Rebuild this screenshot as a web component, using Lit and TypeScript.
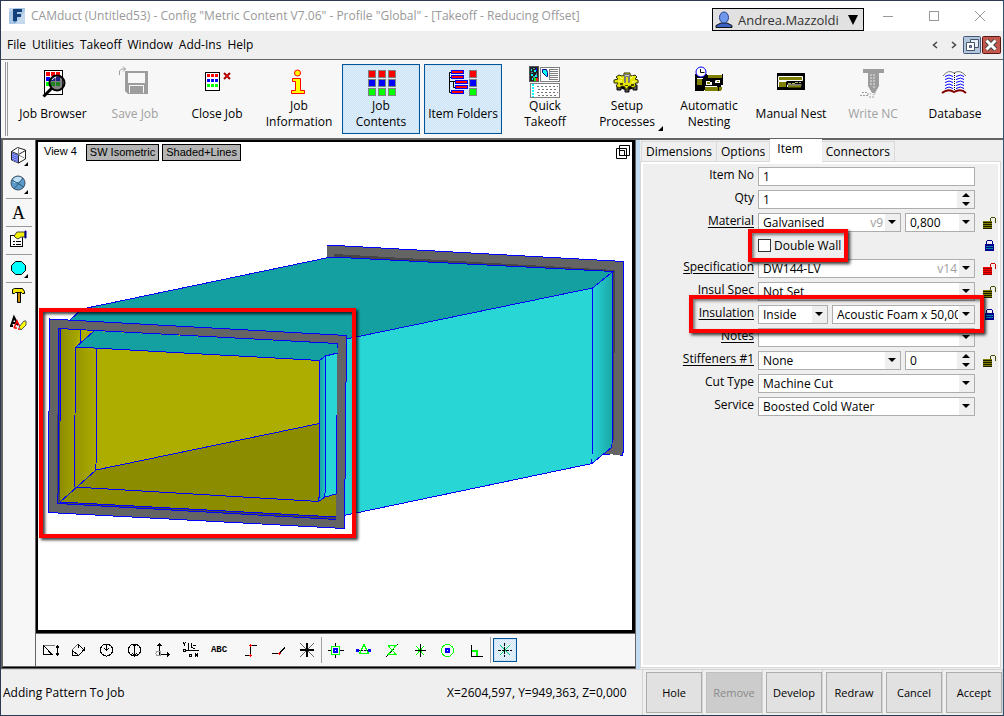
import { LitElement, html, svg, css, nothing } from "lit";
import { customElement, property, state } from "lit/decorators.js";
import { classMap } from "lit/directives/class-map.js";

const grid3 = (x: number, y: number, w: number, h: number, px: number, py: number) =>
  ["#f00", "#00f", "#0f0"].map((c, r) =>
    [0, 1, 2].map((i) => svg`<rect x=${x + i * px} y=${y + r * py} width=${w} height=${h} fill=${c} />`)
  );

const ICONS: Record<string, unknown> = {
  browser: svg`
    <rect x="7.5" y="4.5" width="18" height="24" fill="#fff" stroke="#000"/>
    ${grid3(9, 6, 4, 4, 5, 5)}
    <circle cx="20" cy="17" r="7.5" fill="#333" fill-opacity=".62" stroke="#000" stroke-width="2"/>
    <path d="M14.500 22.500L6.500 30.500" stroke="#000" stroke-width="3"/>
    <path d="M15 14a6 6 0 0 1 4-3" stroke="#fff" fill="none"/>`,
  save: svg`
    <path d="M6 5h23v23h-20l-3-3z" fill="#9d9d9d"/>
    <path d="M9 7h17v10h-17zM10 19h15v8h-15z" fill="#f7f7f7"/><path d="M11 20h13v8h-13z" fill="#9d9d9d"/>
    <path d="M.5 9v-4l2-2h4M4 .5l2.500 2.500l-2.500 2.500" fill="none" stroke="#9d9d9d"/>`,
  close: svg`
    <rect x="4.500" y="6.500" width="14" height="18" fill="#fff" stroke="#000"/>
    ${grid3(6, 8, 3, 3, 4, 5)}
    <path d="M23 7l6 6M29 7l-6 6" stroke="#a00000" stroke-width="2"/><path d="M25 9h2v2h-2z" fill="#f00"/>`,
  info: svg`
    <circle cx="14.500" cy="7" r="3" fill="#ff0" stroke="#f00"/>
    <path d="M9.500 12.500h8v12h4v3h-13v-3h4v-9h-3z" fill="#ff0" stroke="#f00"/>`,
  contents: svg`${["#f00", "#00f", "#0f0"].map((c, r) =>
    [0, 1, 2].map((i) => svg`<rect x=${3.5 + i * 10} y=${4.5 + r * 9} width="7" height="7" fill=${c} stroke="#808080"/>`)
  )}`,
  folders: svg`
    ${["#f00", "#00f", "#0f0"].map((c, r) => svg`<rect x="22.500" y=${4.5 + r * 9} width="7" height="7" fill=${c} stroke="#808080"/>`)}
    <path d="M4 6.500h-1.500v20h2M2.500 11.500h2M2.500 15.500h6M6.500 16v5.500h2" fill="none" stroke="#000"/>
    ${[[4, 4], [4, 9], [8, 14], [8, 19], [4, 24]].map(([x, y]) =>
      svg`<rect x=${x + 0.5} y=${y + 0.5} width="12" height="3" fill="#f00" stroke="#00f"/>`)}`,
  quick: svg`
    <rect x=".5" y=".5" width="9" height="15" fill="#222" stroke="#555"/>
    <path d="M2 3h1v2h-1zM5 4h2v2h-2zM2 8h2v2h-2zM6 9h2v2h-2zM3 12h1v2h-1z" fill="#0ff"/>
    <path d="M4 2h2v1h-2zM2 6h2v1h-2zM7 7h1v2h-1zM4 10h2v2h-2z" fill="#4b8f9f"/>
    <path d="M5 12h2v3h-2z" fill="#0f0"/><path d="M7 12h2v3h-2z" fill="#f22"/><path d="M7 2h1v3h-1z" fill="#00f"/>
    <rect x="11.500" y="1.500" width="19" height="14" fill="#fff" stroke="#808080"/>
    <path d="M13.500 3.500h4l1 3v4h-1l-4-4z" fill="#0ff" stroke="#008"/>
    <path d="M21 3.500h8M21 5.500h8M21 7.500h8M21 9.500h8M21 11.500h8M21 13.500h8M20.500 3v11" stroke="#808080"/>
    <rect x="1.500" y="17.500" width="29" height="14" fill="#fff" stroke="#808080"/>
    <path d="M4 18v13" stroke="#0ff" stroke-width="2" stroke-dasharray="2 1"/>
    <path d="M8 20.500h21M9 23.500h20M8 26.500h21M9 29.500h20" stroke="#777" stroke-dasharray="2 2"/>`,
  setup: svg`
    <ellipse cx="16" cy="18" rx="9" ry="6" fill="#000"/>
    <path d="M6 19h4v5h-4zM14 21h4v5h-4zM22 19h4v5h-4z" fill="#555" stroke="#000"/>
    <path d="M8 9l3 1l2-1v-2h6v2l2 1l3-1l2 2l-2 2l3 1v3h-3l1 3l-3 2l-3-2l-2 1v2h-3v-2l-3-1l-3 2l-3-2l2-3h-4v-3l4-1l-2-2z" fill="#e5e500" stroke="#2b2b00"/>
    <path d="M9 11l3 2M22 10l-3 3M7 15h4M21 16h4" stroke="#ff9"/>
    <path d="M9 17h3v2h-3zM20 18h3v2h-3zM14 19h3v1h-3z" fill="#444400"/>
    <path d="M13.500 8.500h5v8h-1v-6h-3v6h-1z" fill="#c9c9c9" stroke="#777"/>`,
  auto: svg`
    <path d="M2 8h28v11h-2v6h-10v-1h-7v1h-9z" fill="#000"/>
    <path d="M15 8h14v4h-14zM4 13h5v6h-5zM12 21h13v4h-13z" fill="#808000"/>
    <path d="M14 8.500h15M4 12.500h6M12 20.500h12" stroke="#fff"/>
    <path d="M13 15h4v1h2v3h-6zM23 14h4v3h-5v-2z" fill="#fff"/><path d="M14 16h3v2h-3zM24 15h2v1h-2z" fill="#808000"/>
    <path d="M26 21h3v3h-1v1h-2z" fill="#808000"/>
    <circle cx="8" cy="6" r="5" fill="#fff" stroke="#00f"/><path d="M7.500 3v3.500h4" fill="none" stroke="#000"/>`,
  manual: svg`
    <path d="M2 7h28v17h-28z" fill="#000"/>
    <path d="M3.500 10.500h24v4h-24z" fill="#808000" stroke="#fff"/>
    <path d="M4 16h7v5h-7z" fill="#808000"/><path d="M3.500 21v-5.500h8M12.500 21v-2h14" fill="none" stroke="#fff"/>
    <path d="M13 17.500h7M20 16.500h6" stroke="#b8b85a" stroke-dasharray="3 1"/><path d="M13 20.500h13" stroke="#808000" stroke-width="2"/>`,
  nc: svg`
    <path d="M6 3h21v4h-5v13l-4 7h-3l-4-7v-13h-5z" fill="#9d9d9d"/>
    <path d="M14 8v12M17 8v14" stroke="#e8e8e8" stroke-dasharray="2 1"/>
    <path d="M3 29.500h8M5 26.500h6M10 28h4M12 31h5M16 29l3-2" stroke="#9d9d9d" stroke-dasharray="2 1"/>`,
  db: svg`
    <path d="M6 24v-14l-1-2q5-5 10-1q6-4 10 1l-1 2v14q-5-3-9 0q-4-3-9 0z" fill="#fff"/>
    <path d="M4 10q5-7 11-3q6-4 12 3" fill="none" stroke="#777"/><path d="M15.500 7v17" stroke="#000" stroke-dasharray="1 1"/>
    ${[10, 13, 16, 19, 22].map((y) => svg`<path d="M6 ${y + 0.5}q4-3 8 0M17 ${y + 0.5}q5-3 8 0" fill="none" stroke="#00f"/>`)}
    <path d="M3 27q6-5 12-1q7-4 12 1" fill="none" stroke="#800000" stroke-width="2"/>`,
};

const SIDE: Record<string, unknown> = {
  cube: svg`
    <path d="M2.500 5.500l6-4l8 2.500v9l-7 4l-7-3z" fill="#fff" stroke="#222"/>
    <path d="M3 6.500l6 2v8l-6-2.500z" fill="#8f9bf0"/><path d="M4 7v7M6 8v7M8 8.500v7" stroke="#1a2bd0" stroke-dasharray="1 1"/>
    <path d="M2.500 5.500l7 3v8.500M9.500 8.500l7-4" stroke="#222" fill="none"/><path d="M9.500 2v7l6 3" stroke="#888" fill="none"/>
    <path d="M19 16v4h-4z" fill="#000"/>`,
  globe: svg`
    <circle cx="9" cy="9" r="7" fill="#5b9bcb" stroke="#3b4a5c"/><path d="M4 5q4-4 9-1l-1 3l-7 2z" fill="#bfe0f5"/>
    <path d="M3 6l12 7M14 4l-9 11" stroke="#2f5878"/><path d="M19 16v4h-4z" fill="#000"/>`,
  props: svg`
    <rect x="1.500" y="5.500" width="12" height="11" fill="#fff" stroke="#000"/>
    <path d="M4 11.500h2M7 11.500h5M4 14.500h2M7 14.500h5" stroke="#000"/>
    <path d="M5 6l3-4h8v5h-4l-3 2l-2-1z" fill="#f3ef00" stroke="#444"/><path d="M16 1h1v7h-1z" fill="#000080" stroke="#000080"/>`,
  octagon: svg`<path d="M6.500 3.500h6l4 4v5l-4 4h-6l-4-4v-5z" fill="#0ff" stroke="#000"/><path d="M19 16v4h-4z" fill="#000"/>`,
  hammer: svg`
    <path d="M8.500 6.500h3v10h-3z" fill="#c98a00" stroke="#000"/><path d="M3.500 3.500l2-1h8l2 3v2h-2l-1-1h-6l-1 1h-2z" fill="#f3e600" stroke="#000"/>`,
  eraser: svg`
    <path d="M2 12l3-9l3 6M3 9h4M1 12h3M7 9l2 2" fill="none" stroke="#000" stroke-width="2"/>
    <path d="M5 14l3-7l3 6M5 14h3M9 15h4" fill="none" stroke="#f00" stroke-width="1.500"/>
    <path d="M10 13l5-6h2v4l-5 5z" fill="#ff0" stroke="#555"/>`,
};

const DRAW: Record<string, unknown> = {
  rect: svg`<path d="M1.500 4.500v9h8.500zM1.500 4.500l8.500 9M15.500 4v10M14 6.500l1.500-2l1.500 2M14 12.500l1.500 2l1.500-2" fill="none" stroke="#000"/><path d="M2 4.500h11" stroke="#777"/>`,
  rot: svg`<path d="M2.500 9.500v5h6l5-5M2.500 9.500l6 5M8.500 3.500l6 6M14.500 6v3.500h-3M8.500 6.500v-3h-2" fill="none" stroke="#000"/><path d="M2 9l6-6" stroke="#666"/>`,
  radius: svg`<circle cx="8.500" cy="9" r="6" fill="none" stroke="#000"/><path d="M8.500 3v6M6 7l2.500 2.500l2.500-2.500" fill="none" stroke="#000"/>`,
  diam: svg`<circle cx="8.500" cy="9" r="6" fill="none" stroke="#000"/><path d="M8.500 3v12M6.500 5.500l2-2l2 2M6.500 12.500l2 2l2-2" fill="none" stroke="#000"/>`,
  axis: svg`<path d="M5.500 13v-10M3.500 5l2-2l2 2M5 13.500h10M13 11.500l2 2l-2 2" fill="none" stroke="#000"/><circle cx="4.500" cy="12.500" r="2.500" fill="none" stroke="#999"/>`,
  origin: svg`<path d="M1 1l1.500 2l1.500-2M2.500 3v2M6.500 2v7.500h10M6 9.500h-2M9.500 2v4l4 2.500M1.500 8.500h2v2h-2zM7.500 13.500h2v2h-2zM13 12.500l3 3M16 12.500l-3 3M11 4.500h3" fill="none" stroke="#000"/>`,
  corner: svg`<path d="M3 14.500h5.500v-10h6" fill="none" stroke="#000"/><path d="M7 4h3v1h-3zM8 3h1v3h-1zM7 14h3v1h-3zM8 13h1v3h-1z" fill="#f00"/>`,
  slope: svg`<path d="M2 12.500h7l6-6" fill="none" stroke="#000"/><path d="M8 12h3v1h-3zM9 11h1v3h-1z" fill="#f00"/>`,
  star: svg`<path d="M2 2l14 14M16 2l-14 14" stroke="#666"/><path d="M9 2v14M2 9h14" stroke="#000" stroke-width="2"/>`,
  sq: svg`<path d="M1 9.500h16M8.500 2v15" stroke="#000"/><path d="M4.500 5.500h8v8h-8z" fill="#fff" stroke="#0f0"/><path d="M6 7h5v5h-5z" fill="#00f"/><path d="M8 9h1v1h-1z" fill="#fff"/>`,
  tri: svg`<path d="M4.500 12.500l4.500-9l4.500 9z" fill="none" stroke="#0f0"/><path d="M3 9.500h12" stroke="#000" stroke-dasharray="2 1"/><path d="M1 8h3v3h-3zM13 8h3v3h-3z" fill="#00f"/>`,
  hour: svg`<path d="M3 16l12-13" stroke="#000"/><path d="M5 4.500h8l-8 9h8l-8-9" fill="none" stroke="#0f0"/>`,
  cross: svg`<path d="M5 5l8 9M13 5l-8 9" stroke="#0f0"/><path d="M9.500 3v13M4 9.500h11" stroke="#000"/>`,
  circ: svg`<circle cx="8.500" cy="9.500" r="6" fill="none" stroke="#0f0"/><path d="M6 7h5v5h-5z" fill="#00f"/><path d="M8 9h1v1h-1z" fill="#fff"/>`,
  perp: svg`<path d="M4.500 4v11.500h11" fill="none" stroke="#000"/><path d="M5 10h5v5" fill="none" stroke="#0f0" stroke-width="2"/>`,
  snap: svg`<path d="M4 4l10 10M14 4l-10 10" stroke="#0c6"/><path d="M8.500 2v14M2 9.500h14" stroke="#000" stroke-dasharray="3 1"/>`,
};

const BLUE = "#0000ff";

const scene = svg`
  <defs>
    <linearGradient id="side"><stop offset="0" stop-color="#29d6d6"/><stop offset="1" stop-color="#18a4a4"/></linearGradient>
    <linearGradient id="wall1"><stop offset="0" stop-color="#8c8c00"/><stop offset="1" stop-color="#aaaa00"/></linearGradient>
    <linearGradient id="wall2"><stop offset="0" stop-color="#949400"/><stop offset="1" stop-color="#adad00"/></linearGradient>
    <linearGradient id="lip"><stop offset="0" stop-color="#149fa1"/><stop offset="1" stop-color="#24c6c6"/></linearGradient>
    <filter id="drop" x="-10%" y="-10%" width="120%" height="120%"><feDropShadow dx="2" dy="2" stdDeviation="1.500" flood-color="#000" flood-opacity=".8"/></filter>
  </defs>
  <g shape-rendering="crispEdges">
    <path d="M327 245L624 261.500L623 455L602 454L327 258z" fill="#646464"/>
    <path d="M334 254L615 270L614 440L611 440L610 273L334 257z" fill="#464646"/>
    <path d="M70 320L82 309L331 257L613 271.500L592 288L344 340z" fill="#149fa1"/>
    <path d="M344 339L592.500 288L592 463L344 516z" fill="#29d6d6"/>
    <path d="M592.500 288L613 271.500L612 447L592 463.500z" fill="url(#side)"/>
    <path d="M70 320L82 309L331 257L613 271.500L592.500 288L344 339.500M592.500 288L592 463.500L344 515.500M613 271.500L612 447L592 463.500M327 245L624 261.500L623 455M602 454.500h8M620 455.500h3" fill="none" stroke=${BLUE}/>
    <path d="M49 319L346.500 335.500L344.500 528.500L48.500 512.500z" fill="#646464"/>
    <path d="M58 328L337.500 343.500L336 519.500L57 504z" fill="#464646"/>
    <path d="M60.500 329L337 344L336 517.500L60 502z" fill="#adad00"/>
    <path d="M60.500 329H80L75 347L75 488L60 502z" fill="url(#wall1)"/>
    <path d="M75 347L97 348L96 470L75 487.500z" fill="url(#wall2)"/>
    <path d="M96 470L320 423.500L319 501L325 497L336 494V517.500L60 502z" fill="#8c8c00"/>
    <path d="M94 331L337.500 344V353L325.500 356L319.500 360.500L76 347z" fill="#149fa1"/>
    <path d="M325.500 356L337.500 353L336 494L325 497z" fill="#29d6d6"/>
    <path d="M319.500 360.500L325.500 356L325 497L319 501.500z" fill="url(#lip)"/>
    <path d="M49.500 319L346.500 335.500L344.500 528.500L48.500 512.500zM58.500 328.500L58 503.500L336 519.500M60.500 329V421M60 502L336 517" fill="none" stroke=${BLUE}/>
    <path d="M58.500 328.500L337.500 343.500V348M336.500 415V494M80.500 329.500V343M94 331L76 347L319.500 360.500L325.500 356L337.500 353M75.500 347L74.500 487L319 501.500L325 497L336 494M319.500 360.500L319 501.500M325.500 356L325 497M96.500 348L96 470L319.500 423.500M96 470L60 502" fill="none" stroke=${BLUE}/>
  </g>
  <rect x="41" y="310" width="313" height="226" fill="none" stroke="#f00" stroke-width="4" filter="url(#drop)"/>`;

const lock = (color: string, open: boolean) =>
  open
    ? svg`
      <path d="M7.500 6v-3.500l1.500-1h2l1.500 1v4" fill="none" stroke=${color === "#f00" ? "#d00000" : "#4a4a00"}/>
      <path d="M0 5h9v8h-9z" fill=${color}/>
      <path d="M0 6.500h9M0 8.500h9M0 10.500h9M0 12.500h9" stroke=${color === "#f00" ? "#a00000" : "#1c1c00"}/>`
    : svg`
      <path d="M3.500 6v-3.500l1.500-1h3l1.500 1v3.500" fill="none" stroke=${color}/>
      <path d="M2 5h9v7h-9z" fill=${color}/>
      <path d="M3 7.500h7M3 9.500h7" stroke="#008c9c"/>`;

type Field = { kind: "text" | "spin" | "select"; value: string; note?: string; narrow?: boolean };
type Row = { label: string; link?: boolean; fields?: Field[]; lock?: [string, boolean]; check?: boolean; mark?: boolean };

const ROWS: Row[] = [
  { label: "Item No", fields: [{ kind: "text", value: "1" }] },
  { label: "Qty", fields: [{ kind: "spin", value: "1" }] },
  {
    label: "Material", link: true, lock: ["#808000", true],
    fields: [{ kind: "select", value: "Galvanised", note: "v9" }, { kind: "select", value: "0,800", narrow: true }],
  },
  { label: "Double Wall", check: true, lock: ["#000090", false] },
  { label: "Specification", link: true, lock: ["#f00", true], fields: [{ kind: "select", value: "DW144-LV", note: "v14" }] },
  { label: "Insul Spec", lock: ["#808000", true], fields: [{ kind: "select", value: "Not Set" }] },
  {
    label: "Insulation", link: true, mark: true, lock: ["#000090", false],
    fields: [{ kind: "select", value: "Inside", narrow: true }, { kind: "select", value: "Acoustic Foam x 50,000" }],
  },
  { label: "Notes", link: true, fields: [{ kind: "select", value: "" }] },
  {
    label: "Stiffeners #1", link: true, lock: ["#808000", true],
    fields: [{ kind: "select", value: "None" }, { kind: "spin", value: "0", narrow: true }],
  },
  { label: "Cut Type", fields: [{ kind: "select", value: "Machine Cut" }] },
  { label: "Service", fields: [{ kind: "select", value: "Boosted Cold Water" }] },
];

@customElement("item-form")
class ItemForm extends LitElement {
  static styles = css`
    :host { display: flex; flex-direction: column; gap: 4px; padding: 3px 2px 3px 0; }
    .row { display: flex; align-items: center; height: 19px; position: relative; }
    .label { width: 111px; margin-right: 4px; text-align: right; line-height: 16px; padding-bottom: 3px; box-sizing: border-box; white-space: nowrap; color: #000; }
    .link { text-decoration: underline; text-underline-offset: 2px; }
    .fields { flex: 1; min-width: 0; display: flex; gap: 4px; }
    .field { position: relative; flex: 1; min-width: 0; height: 19px; display: flex; }
    .narrow { flex: 0 0 70px; }
    .box { width: 100%; height: 19px; box-sizing: border-box; border: 1px solid #adadad; border-radius: 0; background: #fff; font: inherit; color: #000; margin: 0; padding: 0 16px 0 4px; appearance: none; outline: none; }
    .drop { position: absolute; right: 1px; top: 1px; width: 15px; height: 17px; background: #efefef; pointer-events: none; }
    .note { position: absolute; right: 18px; top: 2px; line-height: 16px; color: #a0a0a0; pointer-events: none; }
    .spin { position: absolute; right: 1px; top: 1px; width: 17px; height: 17px; background: #efefef; display: flex; flex-direction: column; }
    .step { flex: 1; min-height: 0; border: 0; padding: 0; background: none; display: flex; justify-content: center; align-items: center; }
    .lock { width: 13px; height: 13px; margin-left: 8px; }
    .check { display: flex; align-items: center; line-height: 16px; gap: 3px; color: #000; }
    .tick { appearance: none; width: 13px; height: 13px; margin: 0; border: 1px solid #333; background: #fff; }
    .mark { position: absolute; border: 4px solid #f00; box-shadow: 2px 2px 3px rgba(0, 0, 0, 0.8), inset 2px 2px 3px rgba(0, 0, 0, 0.5); z-index: 2; pointer-events: none; box-sizing: border-box; }
    .whole { left: 46px; right: 12px; top: -10px; height: 38px; }
    .small { left: -10px; right: -7px; top: -9px; height: 33px; }
    .ticked { position: relative; }
  `;

  private field(f: Field, label: string, id: string, first: boolean) {
    const name = first ? nothing : `${label} value`;
    const cls = classMap({ field: true, narrow: !!f.narrow });
    if (f.kind === "select")
      return html`<div class=${cls}>
        <select class="box" id=${id} aria-label=${name}><option>${f.value}</option></select>
        ${f.note ? html`<span class="note">${f.note}</span>` : nothing}
        <svg class="drop" viewBox="0 0 15 17" aria-hidden="true"><path d="M3 6h8l-4 4z" fill="#000" /></svg>
      </div>`;
    return html`<div class=${cls}>
      <input class="box" id=${id} aria-label=${name} .value=${f.value} />
      ${f.kind === "spin"
        ? html`<div class="spin">
            <button class="step" aria-label="Increase"><svg width="8" height="4"><path d="M4 0l4 4h-8z" /></svg></button>
            <button class="step" aria-label="Decrease"><svg width="8" height="4"><path d="M0 0h8l-4 4z" /></svg></button>
          </div>`
        : nothing}
    </div>`;
  }

  render() {
    return ROWS.map(
      (r, i) => html`<div class="row">
        ${r.check
          ? html`<span class="label"></span>
              <div class="fields"><div class="ticked">
                <label class="check"><input class="tick" type="checkbox" />${r.label}</label>
                <div class="mark small"></div>
              </div></div>`
          : html`<label class=${classMap({ label: true, link: !!r.link })} for=${`f${i}a`}>${r.label}</label>
              <div class="fields">${r.fields!.map((f, k) => this.field(f, r.label, `f${i}${k ? "b" : "a"}`, !k))}</div>`}
        <svg class="lock" viewBox="0 0 13 13" shape-rendering="crispEdges" aria-hidden="true">
          ${r.lock ? lock(r.lock[0], r.lock[1]) : nothing}
        </svg>
        ${r.mark ? html`<div class="mark whole"></div>` : nothing}
      </div>`
    );
  }
}

const TOOLS: { icon: string; text: string[]; on?: boolean; off?: boolean; menu?: boolean }[] = [
  { icon: "browser", text: ["Job Browser"] },
  { icon: "save", text: ["Save Job"], off: true },
  { icon: "close", text: ["Close Job"] },
  { icon: "info", text: ["Job", "Information"] },
  { icon: "contents", text: ["Job", "Contents"], on: true },
  { icon: "folders", text: ["Item Folders"], on: true },
  { icon: "quick", text: ["Quick", "Takeoff"] },
  { icon: "setup", text: ["Setup", "Processes"], menu: true },
  { icon: "auto", text: ["Automatic", "Nesting"] },
  { icon: "manual", text: ["Manual Nest"] },
  { icon: "nc", text: ["Write NC"], off: true },
  { icon: "db", text: ["Database"] },
];

@customElement("app-root")
class AppRoot extends LitElement {
  @property() user = "Andrea.Mazzoldi";
  @state() private tab = "Item";

  static styles = css`
    :host { display: flex; flex-direction: column; height: 100vh; box-sizing: border-box; overflow: hidden; background: #efefef; border: 1px solid #2b3a52; border-right-color: #2f5573; color: #000; font: 12px/16px "Open Sans", "Noto Sans", sans-serif; }
    button { font: inherit; color: inherit; border-radius: 0; }
    .title { height: 30px; background: #fff; display: flex; align-items: center; padding-left: 8px; flex: none; }
    .caption { flex: 1; margin-left: 6px; color: #999; white-space: nowrap; }
    .user { display: flex; align-items: center; align-self: flex-end; width: 152px; height: 23px; box-sizing: border-box; padding: 0 5px 0 2px; border: 1px solid #000; background: #e1e1e1; font-size: 13px; color: #333; z-index: 1; }
    .username { flex: 1; text-align: left; margin-left: 5px; }
    .winbtn { width: 46px; height: 30px; border: 0; background: none; padding: 0; display: flex; align-items: center; justify-content: center; }
    .winbtns { display: flex; margin-left: 1px; }
    .menu { height: 29px; flex: none; display: flex; align-items: center; padding-left: 3px; border-bottom: 1px solid #646464; box-sizing: border-box; }
    .menuitem { border: 0; background: none; padding: 0 3px; }
    .grow { flex: 1; }
    .mdi { display: flex; align-items: center; padding-right: 2px; }
    .arrow { width: 19px; height: 18px; border: 0; padding: 0; background: none; display: flex; align-items: center; justify-content: center; }
    .mdibtn { width: 19px; height: 19px; padding: 0; border: 0; background: none; display: block; }
    .tools { height: 78px; flex: none; background: #f7f7f7; display: flex; gap: 4px; padding: 4px 4px 0 4px; box-sizing: border-box; }
    .grip { width: 1px; height: 74px; margin-top: -2px; border-left: 1px solid #999; border-right: 1px solid #999; margin-right: 2px; }
    .tool { position: relative; width: 78px; height: 70px; border: 1px solid transparent; background: none; padding: 1px 0 3px; display: flex; flex-direction: column; align-items: center; flex: none; line-height: 16px; }
    .on { border-color: #005499; background: repeating-conic-gradient(#cce4f7 0 25%, #e0eefa 0 50%) 0 0 / 2px 2px; box-shadow: inset 0 0 0 1px #cce4f7; }
    .off { color: #a0a0a0; }
    .text { flex: 1; display: flex; flex-direction: column; justify-content: center; white-space: nowrap; }
    .icon { width: 32px; height: 32px; flex: none; }
    .corner { position: absolute; right: 2px; bottom: 2px; }
    .main { flex: 1; min-height: 0; display: flex; border-top: 2px solid #646464; }
    .work { flex: 1; min-width: 0; display: flex; flex-direction: column; border-right: 1px solid #646464; border-bottom: 1px solid #646464; }
    .upper { flex: 1; min-height: 0; display: flex; border-left: 2px solid #646464; border-bottom: 1px solid #000; }
    .side { width: 32px; background: #f7f7f7; border-right: 1px solid #646464; border-bottom: 1px solid #646464; display: flex; flex-direction: column; align-items: center; padding-top: 2px; }
    .sidebtn { width: 26px; height: 28px; border: 0; padding: 0 0 0 3px; background: none; flex: none; display: flex; align-items: center; }
    .ruled { border-top: 1px solid #999; }
    .letter { font: 18px/20px "Liberation Serif", serif; padding-left: 6px; }
    .right { flex: 1; min-width: 0; display: flex; flex-direction: column; }
    .view { flex: 1; min-height: 0; background: #fff; border: 2px solid #000; border-right-width: 3px; border-bottom-width: 3px; position: relative; }
    .scene { display: block; width: 100%; height: 100%; }
    .viewbar { position: absolute; left: 5px; right: 2px; top: 2px; display: flex; gap: 3px; align-items: flex-start; font: 11px/14px "Liberation Sans", sans-serif; }
    .viewname { padding: 0 6px 0 1px; }
    .chip { border: 1px solid #000; background: #b4b4b4; padding: 0 3px 1px; height: 17px; font: inherit; }
    .draw { height: 34px; flex: none; background: #f7f7f7; border-top: 1px solid #646464; border-bottom: 1px solid #646464; box-sizing: border-box; display: flex; align-items: center; padding-left: 1px; }
    .drawbtn { width: 24px; height: 24px; margin: 0 2px; border: 1px solid transparent; background: none; padding: 0; display: flex; align-items: center; justify-content: center; flex: none; }
    .drawbtn.on { border-color: #005499; background: repeating-conic-gradient(#cce4f7 0 25%, #f0f7fd 0 50%) 0 0 / 2px 2px; }
    .sep { width: 1px; height: 26px; background: #a0a0a0; }
    .gap { width: 4px; }
    .abc { font: bold 9px/10px "Liberation Mono", monospace; }
    .panel { width: 367px; flex: none; box-sizing: border-box; border-left: 4px solid #c3dcf2; padding: 0 2px 1px 0; display: flex; flex-direction: column; }
    .tabs { display: flex; align-items: flex-end; height: 21px; padding-left: 1px; flex: none; }
    .tab { height: 20px; border: 1px solid #d9d9d9; border-bottom: 0; border-left-width: 0; background: #efefef; padding: 0 4px; margin: 0; }
    .tab:first-child { border-left-width: 1px; }
    .current { height: 23px; background: #fff; border-color: #fff; margin-bottom: -1px; padding: 0 18px 5px 7px; position: relative; }
    .page { flex: 1; min-height: 0; border: 1px solid #d9d9d9; box-shadow: inset 0 0 0 2px #fff; padding: 2px; }
    .status { height: 46px; flex: none; display: flex; align-items: stretch; border-top: 1px solid #d4d4d4; box-sizing: border-box; padding-left: 2px; }
    .msg { flex: 1; align-self: center; }
    .coord { align-self: center; width: 195px; }
    .cell { padding: 2px 0 2px 3px; width: 60px; border-right: 1px solid #d4d4d4; box-sizing: border-box; display: flex; }
    .cell:first-child { border-left: 1px solid #d4d4d4; width: 61px; }
    .cells { display: flex; }
    .act { flex: 1; border: 1px solid #adadad; background: #e1e1e1; padding: 0; font-size: 11px; }
    .act:disabled { background: #ccc; color: #8a8a8a; border-color: #bfbfbf; }
  `;

  private drawBtn(k: string, on = false) {
    return html`<button class=${classMap({ drawbtn: true, on })} aria-label=${k}>
      ${k === "abc"
        ? html`<span class="abc">ABC</span>`
        : html`<svg width="18" height="18" viewBox="0 0 18 18" shape-rendering="crispEdges">${DRAW[k]}</svg>`}
    </button>`;
  }

  private sideBtn(k: string, ruled = false) {
    return html`<button class=${classMap({ sidebtn: true, ruled })} aria-label=${k}>
      <svg width="20" height="21" viewBox="0 0 20 21">${SIDE[k]}</svg>
    </button>`;
  }

  render() {
    return html`
      <header class="title">
        <svg width="16" height="16" viewBox="0 0 16 16" aria-hidden="true">
          <rect width="16" height="16" fill="#c4d9ee" /><path d="M0 16V4L7 0H16V3L6 16z" fill="#a9c6e4" />
          <path d="M4 1h9v3h-5v2h4v3h-4v4h-4z" fill="#12407a" /><path d="M4 13h4l-2 2z" fill="#5f8dc0" />
        </svg>
        <span class="caption">CAMduct (Untitled53) - Config "Metric Content V7.06" - Profile "Global" - [Takeoff - Reducing Offset]</span>
        <button class="user">
          <svg width="18" height="18" viewBox="0 0 18 18" aria-hidden="true">
            <path d="M1 16.500v-2l5-2.500h6l5 2.500v2z" fill="#3c63c4" stroke="#111" />
            <ellipse cx="9" cy="6.500" rx="4.500" ry="5.500" fill="#6f97ea" stroke="#24418f" />
          </svg>
          <span class="username">${this.user}</span>
          <svg width="10" height="10"><path d="M0 0h10l-5 10z" /></svg>
        </button>
        <div class="winbtns">
          <button class="winbtn" aria-label="Minimize"><svg width="10" height="10"><path d="M0 5.500h10" stroke="#999" /></svg></button>
          <button class="winbtn" aria-label="Maximize"><svg width="10" height="10"><rect x=".5" y=".5" width="9" height="9" fill="none" stroke="#999" /></svg></button>
          <button class="winbtn" aria-label="Close"><svg width="10" height="10"><path d="M0 0l10 10M10 0L0 10" stroke="#999" /></svg></button>
        </div>
      </header>
      <nav class="menu">
        ${["File", "Utilities", "Takeoff", "Window", "Add-Ins", "Help"].map((m) => html`<button class="menuitem">${m}</button>`)}
        <span class="grow"></span>
        <div class="mdi">
          <button class="arrow" aria-label="Previous"><svg width="6" height="8"><path d="M5 1L1.500 4L5 7" fill="none" stroke="#444" stroke-width="1.500" /></svg></button>
          <button class="arrow" aria-label="Next"><svg width="6" height="8"><path d="M1 1L4.500 4L1 7" fill="none" stroke="#444" stroke-width="1.500" /></svg></button>
          <button class="mdibtn" aria-label="Restore"><svg width="19" height="19">
            <rect x=".5" y=".5" width="17" height="17" rx="1" fill="#b4c6da" stroke="#44597a" />
            <path d="M7.500 3.500h8v8h-8z" fill="#e8eef5" stroke="#44526a" /><path d="M3.500 6.500h8v8h-8z" fill="#fff" stroke="#44526a" /><path d="M6.500 9.500h2v2h-2z" fill="#8ea7c4" stroke="#44526a" />
          </svg></button>
          <button class="mdibtn" aria-label="Close item"><svg width="19" height="19">
            <rect x=".5" y=".5" width="18" height="17" rx="1" fill="#c4574c" stroke="#5a1712" />
            <path d="M4.500 4.500l9 9M13.500 4.500l-9 9" stroke="#444" stroke-width="5" /><path d="M4.500 4.500l9 9M13.500 4.500l-9 9" stroke="#fff" stroke-width="3" />
          </svg></button>
        </div>
      </nav>
      <div class="tools">
        <span class="grip"></span>
        ${TOOLS.map(
          (t) => html`<button class=${classMap({ tool: true, on: !!t.on, off: !!t.off })} ?disabled=${t.off}>
            <svg class="icon" viewBox="0 0 32 32" aria-hidden="true">${ICONS[t.icon]}</svg>
            <span class="text">${t.text.map((l) => html`<span>${l}</span>`)}</span>
            ${t.menu ? html`<svg class="corner" width="5" height="5"><path d="M5 0v5h-5z" /></svg>` : nothing}
          </button>`
        )}
      </div>
      <div class="main">
        <div class="work">
          <div class="upper">
            <div class="side">
              ${this.sideBtn("cube")} ${this.sideBtn("globe")}
              <button class="sidebtn ruled letter">A</button>
              ${this.sideBtn("props", true)} ${this.sideBtn("octagon", true)} ${this.sideBtn("hammer", true)} ${this.sideBtn("eraser")}
            </div>
            <div class="right">
              <div class="view">
                <svg class="scene" viewBox="38 142 594 488" aria-label="Reducing offset duct">${scene}</svg>
                <div class="viewbar">
                  <span class="viewname">View 4</span>
                  <button class="chip">SW Isometric</button>
                  <button class="chip">Shaded+Lines</button>
                  <span class="grow"></span>
                  <svg width="14" height="16" viewBox="0 -1 14 16"><path d="M3.500 .5h10v10h-10zM.5 3.500h10v10h-10z" fill="none" stroke="#000" /><path d="M3.500 5.500h5v5h-5z" fill="none" stroke="#000" /></svg>
                </div>
              </div>
              <div class="draw">
                ${["rect", "rot", "radius", "diam", "axis", "origin", "abc"].map((k) => this.drawBtn(k))}
                <span class="gap"></span>
                ${["corner", "slope", "star"].map((k) => this.drawBtn(k))}
                <span class="sep"></span>
                ${["sq", "tri", "hour", "cross", "circ", "perp"].map((k) => this.drawBtn(k))}
                <span class="sep"></span>
                ${this.drawBtn("snap", true)}
              </div>
            </div>
          </div>
        </div>
        <section class="panel">
          <div class="tabs" role="tablist">
            ${["Dimensions", "Options", "Item", "Connectors"].map(
              (t) => html`<button role="tab" class=${classMap({ tab: true, current: t === this.tab })} @click=${() => (this.tab = t)}>${t}</button>`
            )}
          </div>
          <div class="page"><item-form></item-form></div>
        </section>
      </div>
      <footer class="status">
        <span class="msg">Adding Pattern To Job</span>
        <span class="coord">X=2604,597, Y=949,363, Z=0,000</span>
        <div class="cells">
          ${["Hole", "Remove", "Develop", "Redraw", "Cancel", "Accept"].map(
            (b) => html`<div class="cell"><button class="act" ?disabled=${b === "Remove"}>${b}</button></div>`
          )}
        </div>
      </footer>
    `;
  }
}
